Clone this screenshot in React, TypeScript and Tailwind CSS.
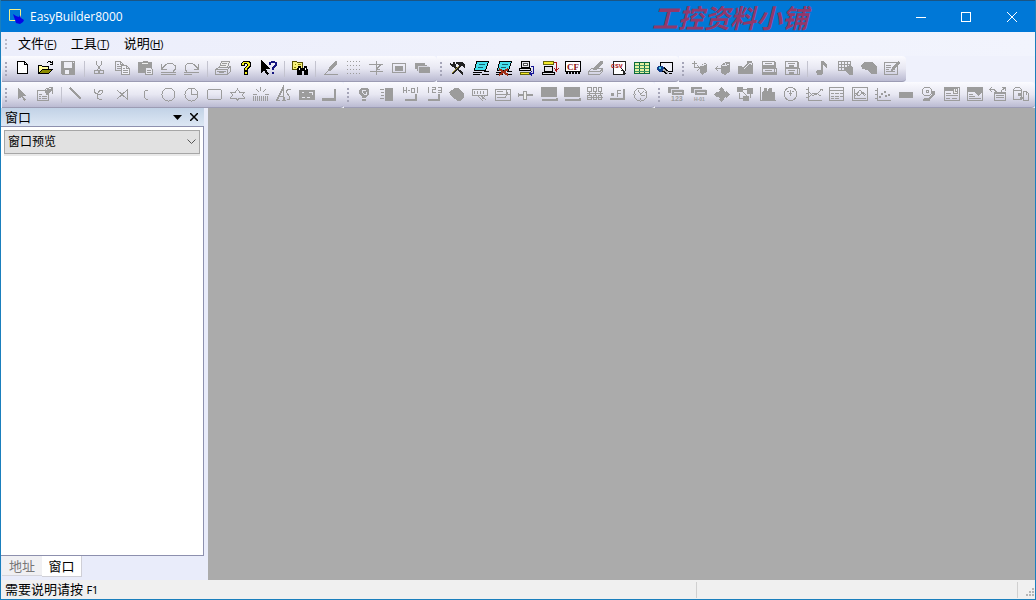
import type { ReactNode } from "react";

const INK = "#9c9c9c";

type Tool = { name: string; art: ReactNode } | null;

const Label = ({ x, y, size = 7, fill = INK, bold = false, children }: { x: number; y: number; size?: number; fill?: string; bold?: boolean; children: string }) => (
  <text x={x} y={y} fontSize={size} fill={fill} stroke="none" fontWeight={bold ? 700 : 400} fontFamily="'Liberation Sans', sans-serif">
    {children}
  </text>
);

const standardTools: Tool[] = [
  { name: "新建", art: <path d="M2.5 1.5h7l3 3v9h-10zM9.5 1.5v3h3" stroke="#000" fill="#fff" /> },
  {
    name: "打开",
    art: (
      <>
        <path d="M.5 13.5v-8h3l1 1h6v3h-5l-5 4" stroke="#000" fill="#fffb9c" />
        <path d="M.5 13.5l4-4h10l-4 4z" stroke="#000" fill="#8c8c00" />
        <path d="M8.5 2.5h1l1-1h2l1 2M14.5 1v3h-3" stroke="#000" />
      </>
    ),
  },
  {
    name: "保存",
    art: (
      <>
        <path d="M0 1h14v14H1l-1-1z" fill={INK} stroke="none" />
        <path d="M3 2h8v6H3zM4 10h4v4H4zM12 2h1v1h-1z" fill="#eeeef5" stroke="none" />
      </>
    ),
  },
  null,
  {
    name: "剪切",
    art: (
      <>
        <path d="M4.5 1v3l4 6M9.5 1v3l-4 6" />
        <circle cx="4.5" cy="12" r="2" />
        <circle cx="9.5" cy="12" r="2" />
      </>
    ),
  },
  {
    name: "复制",
    art: (
      <>
        <path d="M.5 1.5h5l3 3v6h-8zM5.5 1.5v3h3M2 4.5h2M2 6.5h4M2 8.5h4" />
        <path d="M6.5 5.5h5l3 3v6h-8zM11.5 5.5v3h3M8 8.5h2M8 10.5h5M8 12.5h5" fill="#f0f0f7" />
      </>
    ),
  },
  {
    name: "粘贴",
    art: (
      <>
        <path d="M0 2h4l1-1h4l1 1h4v11H0z" fill={INK} stroke="none" />
        <path d="M4 3.5h6" stroke="#eee" />
        <path d="M7.5 7.5h5l2 2v5h-7zM9 10.5h4M9 12.5h4" fill="#e8e8f0" />
      </>
    ),
  },
  { name: "撤销", art: <path d="M.5 4v5h5M1 8.5l4-4 2-1h4l3 2v4l-2 2M0 12.5h15M0 14.5h15" /> },
  { name: "重做", art: <path d="M14.5 4v5h-5M14 8.5l-4-4-2-1H4l-3 2v4l2 2M0 12.5h15M0 14.5h8" /> },
  null,
  {
    name: "打印",
    art: (
      <>
        <path d="M4.5 7.5l2-6h8l-2 6M7 3.5h5M6 5.5h5" fill="#eee" />
        <path d="M.5 9.5l3-2h10l2-1v5l-3 3h-12zM.5 9.5h12v5M12.5 9.5l3-3M2 11.5h9M4 12.5h5" />
      </>
    ),
  },
  {
    name: "帮助",
    art: (
      <>
        <path d="M5 1h6l2 2v4l-3 2v2H6V8l3-2V4H7v2H3V3zM6 11h4v4H6z" fill="#000" stroke="none" />
        <path d="M5 2h5l2 2v2L9 8v2H7V8l3-3-1-2H6v2H4V3zM7 12h2v2H7z" fill="#f2ee1c" stroke="none" />
      </>
    ),
  },
  {
    name: "内容帮助",
    art: (
      <>
        <path d="M0 0l9 9H5l3 5-2 1-3-5-3 3z" fill="#000" stroke="none" />
        <path d="M9 5V3l2-1h2l2 1v2l-3 3v2M12 12v2" stroke="#15157f" strokeWidth="2" />
      </>
    ),
  },
  null,
  {
    name: "查找",
    art: (
      <>
        <path d="M.5 9.5v-8h4l1 1h5v7z" fill="#f6f07a" stroke="#554f00" />
        <path d="M2 7h2M6 4h3M3 4h1" stroke="#8c8600" />
        <path d="M6 6h3v2h3V6h3l1 5v4h-4v-4h-2v4H5v-4z" fill="#000" stroke="none" />
        <path d="M7.5 8v2M13.5 8v2" stroke="#fff" />
      </>
    ),
  },
  null,
  {
    name: "画笔",
    art: (
      <>
        <path d="M12 1h2v3l-6 7H5l1-3z" fill={INK} stroke="none" />
        <path d="M1 14.5h14M5 11l-3 3" />
      </>
    ),
  },
  { name: "网格", art: <path d="M1 1.5h15M1 5.5h15M1 9.5h15M1 13.5h15" strokeDasharray="1 2" /> },
  { name: "对齐网格", art: <path d="M0 4.5h14M1 11.5h13M7.5 1v14M12.5 4l-5 5M8 9.5h3M7.5 6v4" /> },
  {
    name: "群组",
    art: (
      <>
        <path d="M.5 3.5h13v9H.5z" />
        <path d="M3 6h8v5H3z" fill={INK} stroke="none" />
      </>
    ),
  },
  {
    name: "图层",
    art: (
      <>
        <path d="M0 3h10v6H0z" fill={INK} stroke="none" />
        <path d="M2 5h10v6H2z" fill={INK} stroke="none" />
        <path d="M3.5 12V6.5H14" stroke="#d4d4de" />
        <path d="M4 7h11v6H4z" fill={INK} stroke="none" />
      </>
    ),
  },
];

const Computer = () => (
  <>
    <path d="M3.5 1.5h12l-3 9h-11z" fill="#45dfec" stroke="#000" />
    <path d="M6 4.5h6M5 7.5h5" stroke="#15616e" />
    <path d="M0 12.5h9M11 11.5h5M0 14.5h7M9 14.5h7" stroke="#000" />
  </>
);

const compileTools: Tool[] = [
  {
    name: "编译",
    art: (
      <>
        <path d="M4 6l9 8" stroke="#222" strokeWidth="2" />
        <path d="M2 14l8-8" stroke="#222" strokeWidth="2" />
        <path d="M2 13l7-7" stroke="#b0a040" />
        <path d="M6 2h6l3 2v4h-1l-2-2H9L8 4H6zM1 2v2h2V2h2l1 3-2 2H2L0 5V3z" fill="#222" stroke="none" />
      </>
    ),
  },
  { name: "离线模拟", art: <Computer /> },
  {
    name: "在线模拟",
    art: (
      <>
        <Computer />
        <path d="M3 9l9 6M12 9l-9 6" stroke="#a03018" strokeWidth="2" />
      </>
    ),
  },
  {
    name: "下载",
    art: (
      <>
        <path d="M2.5 1.5h8v6h-8zM.5 8.5h11v2H.5z" stroke="#000" fill="#e4e4ea" />
        <path d="M4.5 3.5h4v2h-4z" stroke="#555" fill="#fff" />
        <path d="M1.5 12.5h9v2h-9z" stroke="#66660a" fill="#f4ea2b" />
        <path d="M12 6.5h2.5v7H12M13 11l-2 2.5 2 2" stroke="#151596" />
      </>
    ),
  },
  {
    name: "上传",
    art: (
      <>
        <path d="M1.5 1.5h10v3h-10z" stroke="#66660a" fill="#f4ea2b" />
        <path d="M2.5 6.5h8v5h-8zM.5 12.5h12v2H.5z" stroke="#000" fill="#e4e4ea" />
        <path d="M12 2.5h2.5v8M12 8l2.5 3 2-3" stroke="#a81818" />
      </>
    ),
  },
  {
    name: "CF 卡",
    art: (
      <>
        <path d="M.5 1.5h15v10H.5z" stroke="#000" fill="#fff" />
        <path d="M1 13h14" stroke="#000" strokeWidth="2" strokeDasharray="2 1" />
        <text x="2" y="10" fontSize="9" fontWeight="700" fill="#8c1010" stroke="none" fontFamily="'Liberation Serif', serif">
          CF
        </text>
      </>
    ),
  },
  {
    name: "绘图",
    art: (
      <>
        <path d="M12 1h3v3L8 10H5l1-3z" fill={INK} stroke="none" />
        <path d="M.5 11.5l3-3h11v3l-3 3H.5zM1 11.5h11l3-3M12 12l3-3" />
      </>
    ),
  },
  {
    name: "CSV",
    art: (
      <>
        <path d="M2.5 1.5h12v7l-1 6h-11z" stroke="#222" fill="#fff" />
        <path d="M10 10.5h2v3h3M10 8l4 4" stroke="#222" />
        <Label x={0} y={8} size={7} fill="#b01818" bold>csv</Label>
      </>
    ),
  },
  {
    name: "配方",
    art: (
      <>
        <path d="M0 2h16v12H0z" fill="#0b6a3b" stroke="none" />
        <path d="M1 3h4v10H1zM6 3h4v10H6zM11 3h4v10h-4z" fill="#e6f2a0" stroke="none" />
        <path d="M1 5.5h14M1 8.5h14M1 11.5h14" stroke="#3c9464" />
      </>
    ),
  },
  {
    name: "浏览",
    art: (
      <>
        <path d="M3.5 2.5h12v9h-12z" stroke="#000" fill="#f0f0f8" />
        <path d="M5 8l6 5" stroke="#000" strokeWidth="4" />
        <path d="M6 9l5 4" stroke="#b0b0b0" strokeWidth="2" />
        <path d="M1 6h4l2 2-2 4H2l-2-2V7z" fill="#123f8c" stroke="none" />
        <path d="M2 8h2" stroke="#4fd3e0" strokeWidth="2" />
        <path d="M12 13.5h3" stroke="#000" />
      </>
    ),
  },
];

const Drawers = ({ deep }: { deep?: boolean }) => (
  <>
    <path d="M1.5 1.5h12v13h-12zM1.5 7.5h12M1.5 8.5h14v6h-14M14.5 2v6M4 3.5h7M4 10.5h7" />
    <path d={deep ? "M1 5h12v3H1zM2 12h14v3H2z" : "M5 5h5v2H5zM5 12h5v2H5z"} fill={INK} stroke="none" />
  </>
);

const libraryTools: Tool[] = [
  {
    name: "标签库",
    art: (
      <>
        <path d="M8 6l5-3 2 1v8l-5 3-2-2z" fill={INK} stroke="none" />
        <path d="M2.5 1v6M0 3.5h5M2 7.5h5M5 5l3 3-3 3" />
        <path d="M9 6l5-2" stroke="#e6e6ee" />
      </>
    ),
  },
  {
    name: "导出",
    art: (
      <>
        <path d="M6 5l5-3h4v10l-5 3-4-2z" fill={INK} stroke="none" />
        <path d="M0 8.5h6M3 6L.5 8.5 3 11" />
        <path d="M7 5l3 1 4-2M10 3v2" stroke="#e6e6ee" />
      </>
    ),
  },
  {
    name: "图形库",
    art: (
      <>
        <path d="M0 6h4l1 2 4-5V1h5l1 3v10H0z" fill={INK} stroke="none" />
        <path d="M6 9l5-5M11 3h2v2" stroke="#e6e6ee" />
      </>
    ),
  },
  { name: "向量图库", art: <Drawers deep /> },
  { name: "图片库", art: <Drawers /> },
  null,
  { name: "声音库", art: <path d="M1 11l2-1h3V1h2l4 4v4l-1-2-3-2v8l-2 2H2z" fill={INK} stroke="none" /> },
  {
    name: "宏",
    art: (
      <>
        <path d="M.5 1.5h12v9H.5zM.5 4.5h12M.5 7.5h12M3.5 1.5v9M6.5 1.5v9M9.5 1.5v9" />
        <path d="M6 9l6-4 3 3v7h-4z" fill={INK} stroke="none" />
      </>
    ),
  },
  { name: "标签", art: <path d="M0 5l3-3h8l5 5v7h-5L6 10l-5-1z" fill={INK} stroke="none" /> },
  {
    name: "编辑",
    art: (
      <>
        <path d="M.5 2.5h13v12H.5zM2 5.5h5M2 7.5h5M2 9.5h3M2 11.5h9M8 9.5h3" />
        <path d="M14 1l2 2-6 7-3 1 1-3z" fill={INK} stroke="none" />
      </>
    ),
  },
];

const drawTools: Tool[] = [
  { name: "选择", art: <path d="M3 2l9 8H8l3 4-2 1-2-4-4 2z" fill={INK} stroke="none" /> },
  {
    name: "属性",
    art: (
      <>
        <path d="M-.5 4.5h11v10h-11zM1 10.5h2M4 10.5h5M1 12.5h2M4 12.5h5M1 8.5h3" />
        <path d="M5.5 5.5l3-3 5-1v3l-4 4h-2M14.5 1v7" />
        <path d="M6 6l3-3h4v2L9 8z" fill={INK} stroke="none" />
      </>
    ),
  },
  null,
  { name: "直线", art: <path d="M1 2l11 11" strokeWidth="1.5" /> },
  { name: "曲线", art: <path d="M2 3v3l3 2h4l2-2-1-2H8L5 9v3l2 1h3" /> },
  { name: "折线", art: <path d="M2 4l10 9V4L2 13" /> },
  { name: "弧线", art: <path d="M10 4H8L6 6v5l2 2h2" /> },
  { name: "圆形", art: <circle cx="7.5" cy="8.5" r="6.5" /> },
  { name: "扇形", art: <><circle cx="7.5" cy="8.5" r="6.5" /><path d="M7.5 2v6.5H14" /></> },
  { name: "矩形", art: <path d="M1.5 3.5h12l1 1v8l-1 1h-12l-1-1v-8z" /> },
  { name: "多边形", art: <path d="M7.5 3l2 3h5l-2 3 2 3h-5l-2 2-2-2h-5l2-3-2-3h5z" /> },
  {
    name: "刻度",
    art: (
      <>
        <path d="M0 12.5h16" strokeWidth="5" strokeDasharray="1 1" />
        <path d="M7.5 1v4M3 3l3 3M13 3l-3 3M0 8.5h4M12 8.5h4" />
      </>
    ),
  },
  {
    name: "文字",
    art: (
      <>
        <path d="M1 14L7 2l1 12M3 10.5h5M-.5 14.5h4M6 14.5h4" strokeWidth="1.5" />
        <path d="M14.5 4v-1h-3l-1 3 3 5v2h-3" />
      </>
    ),
  },
  {
    name: "图片",
    art: (
      <>
        <path d="M0 4h16v10H0z" fill={INK} stroke="none" />
        <path d="M3 11.5h3M8 11.5h3M3 6.5h2M10 6.5h3v2" stroke="#e6e6ee" />
      </>
    ),
  },
  { name: "底图", art: <path d="M0 12h14v3H0zM12 3h2v12h-2z" fill={INK} stroke="none" /> },
];

const Corner = () => <path d="M2 13h12v2H2zM12 8h2v7h-2z" fill={INK} stroke="none" />;

const Block = () => (
  <>
    <path d="M0 1h16v10H0z" fill={INK} stroke="none" />
    <path d="M1 14h15M15.5 12v3" strokeWidth="2" />
  </>
);

const objectTools: Tool[] = [
  {
    name: "指示灯",
    art: (
      <>
        <path d="M4 2h6l2 2v4l-3 3v4H5v-4L2 8V4z" fill={INK} stroke="none" />
        <path d="M9 4H6L5 6l2 2h2V6M5 12.5h4" stroke="#e6e6ee" />
      </>
    ),
  },
  {
    name: "多状态指示灯",
    art: (
      <>
        <path d="M5 2h8v13H5z" fill={INK} stroke="none" />
        <path d="M0 3.5h4M1 6.5h3M1 9.5h3M0 12.5h4" />
      </>
    ),
  },
  { name: "位状态设定", art: <><path d="M.5 1v6M.5 4.5h3M3.5 1v6M5 4.5h2M8.5 2v4h3v-4h-3M14.5 1v6" /><Corner /></> },
  { name: "多状态设定", art: <><path d="M2.5 1v6M6 1.5h3.5v2H6.5v3H10M12 1.5h3.5v5H12M12 4h3" /><Corner /></> },
  { name: "功能键", art: <path d="M0 6l6-4h3l6 6v3l-4 4H9l-6-4z" fill={INK} stroke="none" /> },
  {
    name: "位状态切换",
    art: (
      <>
        <path d="M.5 3.5h15v6H.5zM2.5 5v3M5.5 5v3M8.5 5v3M11.5 5v3" />
        <path d="M5 9l6 6M8 9l6 5M14 9l-5 5" />
      </>
    ),
  },
  { name: "多状态切换", art: <path d="M.5 3.5h15v11H.5zM2 5.5h6M0 8.5h16M11.5 4v4M2 11.5h8M10 12l3-6" /> },
  { name: "滑动开关", art: <><path d="M0 9h15" strokeWidth="2" /><path d="M5.5 5.5h3v8h-3z" fill="#eee" /><path d="M.5 7v4" /></> },
  { name: "数值输入", art: <Block /> },
  { name: "字符输入", art: <Block /> },
  {
    name: "间接窗口",
    art: <path d="M.5 1.5h4v4h-4zM6.5 1.5h3v4h-3zM11.5 1.5h3v4h-3zM0 7.5h16M.5 9.5h4v4h-4zM6.5 9.5h3v4h-3zM11.5 9.5h3v4h-3zM0 11.5h16M2.5 5v4M8.5 5v4M13.5 5v4" />,
  },
  { name: "直接窗口", art: <><path d="M1 7h3v3H1zM0 12h15v2H0zM13 3h2v11h-2z" fill={INK} stroke="none" /><path d="M7.5 11V4.5H11M8 7.5h3" /></> },
  { name: "移动图形", art: <><circle cx="7.5" cy="8.5" r="6.5" /><path d="M5 4l3 5 4 1M2 8.5h1M12 6.5h1M7.5 12v2M8 8l3-3" /></> },
];

const Stack = ({ text, size }: { text: string; size: number }) => (
  <>
    <path d="M0 1h11v6H0z" fill={INK} stroke="none" />
    <path d="M4 4h12v5H4z" fill={INK} stroke="none" />
    <path d="M3.5 8V3.5H15M6 6.5h8" stroke="#dcdce6" />
    <Label x={3} y={15} size={size} bold>{text}</Label>
  </>
);

const displayTools: Tool[] = [
  { name: "数值显示", art: <Stack text="123" size={7} /> },
  { name: "字符显示", art: <Stack text="H-01" size={5} /> },
  { name: "移动", art: <path d="M7.5 1l3 3H9l2 2h1V5l4 3.5L12 12v-1h-1l-2 2h2l-3.5 3L4 13h2l-2-2H3v1L0 8.5 3 5v1h1l2-2H4.5z" fill={INK} stroke="none" /> },
  {
    name: "动画",
    art: (
      <>
        <path d="M0 1h6v5H0zM10 2h6v6h-6zM6 10h6v5H6z" fill={INK} stroke="none" />
        <path d="M6 3.5h4M2.5 7v5h4M13.5 8v4M6 6l4 4" />
      </>
    ),
  },
  { name: "棒图", art: <><path d="M.5 1v13.5H16" /><path d="M2 7l2-3V2h3v4l2-4h3v4h3v8H2z" fill={INK} stroke="none" /></> },
  { name: "表针", art: <><circle cx="7.5" cy="8" r="6.5" /><path d="M4 5.5h2M9 5.5h2M7.5 4v6M6 7.5h3" /></> },
  { name: "趋势图", art: <path d="M2.5 1v13.5H16M0 3.5h2M0 7.5h2M0 11.5h2M3 11l4-4 3 2 5-5M3 6l4 4 3-3 5 3M14 3h2v2" /> },
  { name: "历史数据", art: <path d="M.5 1.5h14v13H.5zM1 4.5h14M2 7.5h3M6 7.5h4M11 7.5h3M2 10.5h3M6 10.5h4M11 10.5h3M2 12.5h3M6 12.5h4" /> },
  { name: "数据群组", art: <path d="M.5 1.5h15v13H.5zM2.5 3v9.5H14M3 10l5-6 5 6M3 7l4 3 4-4 3 3" /> },
  {
    name: "XY 图",
    art: (
      <>
        <path d="M2.5 2v12.5H16M0 4.5h2M0 8.5h2M0 12.5h2" />
        <path d="M4 10h2v2H4zM6 7h2v2H6zM9 5h2v2H9zM10 9h2v2h-2zM13 8h2v2h-2z" fill={INK} stroke="none" />
      </>
    ),
  },
  { name: "报警条", art: <path d="M1 6h14v6H1z" fill={INK} stroke="none" /> },
  {
    name: "报警显示",
    art: (
      <>
        <circle cx="6" cy="5.5" r="4.5" />
        <path d="M5 4.5h2v2H5zM3 12.5h6" />
        <path d="M11 5h3v3l-3 4-3 2v-3l3-2zM2 13h7v2H2z" fill={INK} stroke="none" />
      </>
    ),
  },
  {
    name: "事件显示",
    art: (
      <>
        <path d="M.5 1.5h15v13H.5zM2 7.5h5M2 9.5h12M2 12.5h4M8 12.5h5" />
        <path d="M1 2h8v3H1z" fill={INK} stroke="none" />
        <path d="M9.5 2.5h4v5h-4zM11.5 3v2h2" fill="#eee" />
      </>
    ),
  },
  {
    name: "备份",
    art: (
      <>
        <path d="M.5 1.5h15v13H.5zM2 8.5h4M2 10.5h6M2 12.5h12" />
        <path d="M1 2h14v4l-4 4-3-3-1-1H1z" fill={INK} stroke="none" />
      </>
    ),
  },
  {
    name: "数据传输",
    art: (
      <>
        <path d="M4.5 6.5h11v8h-11zM6 9.5h8M6 11.5h8M0 3.5h4l3 3M2 1L0 3.5 2 6M15 2l-4 3v1M12 1.5h3v3" />
        <path d="M5 6h10v2H5z" fill={INK} stroke="none" />
      </>
    ),
  },
  {
    name: "数据库",
    art: (
      <>
        <path d="M.5 3.5l2-2h4l2 2v10h-8zM1 4.5h7M10.5 5.5h3l2 2v7h-5zM13.5 5.5v3" />
        <path d="M5 7h4v3H5zM7 11h3v2H7z" fill={INK} stroke="none" />
      </>
    ),
  },
];

const Toolbar = ({ tools, label }: { tools: Tool[]; label: string }) => (
  <div
    role="toolbar"
    aria-label={label}
    className="flex h-[26px] shrink-0 items-start rounded-r-sm border-b border-[#9c9cb4] bg-linear-to-b from-[#fbfbff] via-[#e7e7f2] to-[#bbbbd2] pr-[3px]"
  >
    <div className="flex w-[9px] flex-col gap-[2px] pt-[6px] pl-[3px]">
      <span className="size-[2px] bg-[#a5a5b8]" />
      <span className="size-[2px] bg-[#a5a5b8]" />
      <span className="size-[2px] bg-[#a5a5b8]" />
      <span className="size-[2px] bg-[#a5a5b8]" />
    </div>
    {tools.map((tool, index) =>
      tool ? (
        <button key={index} type="button" aria-label={tool.name} className="flex h-[25px] w-[23px] items-start pt-1 pl-1">
          <svg className="size-4 overflow-visible" viewBox="0 0 16 16" fill="none" stroke={INK} shapeRendering="crispEdges" aria-hidden="true">
            {tool.art}
          </svg>
        </button>
      ) : (
        <span key={index} className="flex h-[25px] w-2 justify-center pt-[5px]">
          <span className="h-4 w-px bg-[#c3c3cf]" />
        </span>
      )
    )}
  </div>
);

const menus = [
  { text: "文件", hotkey: "F" },
  { text: "工具", hotkey: "T" },
  { text: "说明", hotkey: "H" },
];

const TitleBar = () => (
  <header className="flex h-8 shrink-0 items-center border-t border-[#1b5583] bg-[#0078d7] text-white">
    <svg className="ml-[7px] size-4 shrink-0" viewBox="0 0 16 16" aria-hidden="true">
      <path d="M1.5.5h11v11h-11z" fill="none" stroke="#f0f08c" />
      <path d="M5 5l3 2 3 1 1-2 1 3 3 2-1 2-3 2-4-1-1-3z" fill="#0404e8" />
    </svg>
    <h1 className="ml-[6px] font-['Open_Sans',sans-serif] text-xs">EasyBuilder8000</h1>
    <p className="flex-1 pr-[90px] text-right font-['Noto_Sans_CJK_SC',sans-serif] text-[26px] leading-[30px] font-bold whitespace-nowrap text-[#92386a] italic">
      工控资料小铺
    </p>
    <button type="button" aria-label="最小化" className="flex h-full w-[45px] items-center justify-center">
      <svg className="size-[10px]" viewBox="0 0 10 10" stroke="#fff" shapeRendering="crispEdges"><path d="M0 5.5h10" /></svg>
    </button>
    <button type="button" aria-label="最大化" className="flex h-full w-[46px] items-center justify-center">
      <svg className="size-[10px]" viewBox="0 0 10 10" fill="none" stroke="#fff" shapeRendering="crispEdges"><path d="M.5.5h9v9h-9z" /></svg>
    </button>
    <button type="button" aria-label="关闭" className="flex h-full w-[46px] items-center justify-center">
      <svg className="size-[10px]" viewBox="0 0 10 10" stroke="#fff"><path d="M0 0l10 10M10 0L0 10" /></svg>
    </button>
  </header>
);

const SidePanel = () => (
  <aside className="flex w-[207px] shrink-0 flex-col bg-[#e9ecfa] pr-1">
    <div className="flex h-[18px] shrink-0 items-center bg-linear-to-b from-[#c2d2e6] to-[#dde7f4] pr-[2px] pl-1">
      <h2 className="flex-1 text-[13px] leading-4">窗口</h2>
      <button type="button" aria-label="面板菜单" className="flex w-4 justify-center">
        <svg className="h-[5px] w-[9px]" viewBox="0 0 9 5"><path d="M0 0h9L4.5 5z" /></svg>
      </button>
      <button type="button" aria-label="关闭面板" className="flex w-[17px] justify-center">
        <svg className="size-2" viewBox="0 0 8 8" stroke="#000" strokeWidth="1.5"><path d="M0 0l8 8M8 0L0 8" /></svg>
      </button>
    </div>
    <div className="flex-1 border-y border-r border-[#8d90ae] bg-white px-[3px] pt-[3px]">
      <div className="relative border-b-2 border-[#e9e9e9]">
        <select aria-label="窗口" className="block h-6 w-full appearance-none border border-[#a6a6a6] bg-[#e1e1e1] px-[3px] text-xs">
          <option>窗口预览</option>
        </select>
        <svg className="pointer-events-none absolute top-[9px] right-1 h-[5px] w-[9px]" viewBox="0 0 9 5" fill="none" stroke="#555"><path d="M.5.5l4 4 4-4" /></svg>
      </div>
    </div>
    <div role="tablist" className="flex h-6 shrink-0 items-start pl-px text-[13px] leading-5">
      <button type="button" role="tab" aria-selected="false" className="h-[20px] w-10 border-b border-[#d5d5dc] bg-[#f0f0f3] text-[#777]">地址</button>
      <button type="button" role="tab" aria-selected="true" className="h-[21px] w-10 border-r border-b border-[#cfcfd6] bg-white">窗口</button>
    </div>
  </aside>
);

const StatusBar = () => (
  <footer className="flex h-[19px] shrink-0 items-center bg-[#f0f0f0] text-[13px] leading-[18px]">
    <p className="flex-1 pl-1">
      需要说明请按 <span className="text-[11px]">F1</span>
    </p>
    <span className="h-4 w-[322px] border-x border-[#d0d0d0]" />
    <span className="flex w-[17px] items-end justify-end self-stretch pr-px pb-[2px]">
      <svg className="size-[9px]" viewBox="0 0 9 9" fill="#b5b5b5" shapeRendering="crispEdges" aria-hidden="true">
        <path d="M7 0h2v2H7zM7 3h2v2H7zM4 3h2v2H4zM7 6h2v2H7zM4 6h2v2H4zM1 6h2v2H1z" />
      </svg>
    </span>
  </footer>
);

export default function App() {
  return (
    <div className="flex h-screen flex-col overflow-hidden border-x border-b border-[#1a7fbd] bg-[#eff1fc] font-['Noto_Sans','Noto_Sans_CJK_SC',sans-serif] text-black">
      <TitleBar />
      <nav className="flex h-6 shrink-0 items-center bg-linear-to-r from-[#eceefb] to-[#f2f4fd] text-[13px]">
        <div className="flex w-[17px] flex-col gap-[2px] pl-1">
          <span className="size-[2px] bg-[#b9b9c8]" />
          <span className="size-[2px] bg-[#b9b9c8]" />
          <span className="size-[2px] bg-[#b9b9c8]" />
        </div>
        {menus.map((menu) => (
          <button key={menu.text} type="button" className="mr-[14px] whitespace-nowrap">
            {menu.text}
            <span className="font-['Liberation_Sans',sans-serif] text-[10px]">
              (<u>{menu.hotkey}</u>)
            </span>
          </button>
        ))}
      </nav>
      <div className="flex shrink-0 pl-px">
        <Toolbar label="标准" tools={standardTools} />
        <Toolbar label="编译" tools={compileTools} />
        <Toolbar label="图库" tools={libraryTools} />
      </div>
      <div className="flex shrink-0 pl-px">
        <Toolbar label="绘图" tools={drawTools} />
        <Toolbar label="元件" tools={objectTools} />
        <Toolbar label="显示" tools={displayTools} />
      </div>
      <div className="flex min-h-0 flex-1">
        <SidePanel />
        <main className="flex-1 bg-[#ababab]" />
      </div>
      <StatusBar />
    </div>
  );
}
